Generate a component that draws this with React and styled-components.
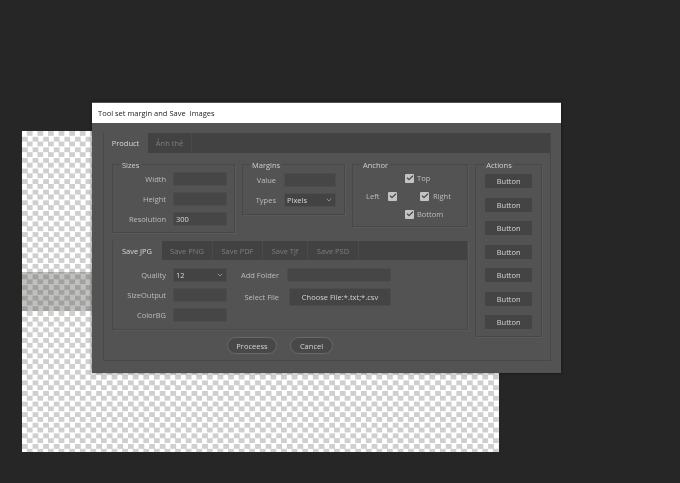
import React from 'react';
import styled, { createGlobalStyle } from 'styled-components';
import { Check, ChevronDown } from 'lucide-react';

const GlobalStyle = createGlobalStyle`
  html, body {
    margin: 0;
    padding: 0;
    background: #262626;
    font-family: "Open Sans", "Liberation Sans", sans-serif;
    font-size: 7.5px;
  }
`;

const Workspace = styled.div`
  position: relative;
  width: 680px;
  height: 483px;
  overflow: hidden;
  background: #262626;
  filter: blur(0.35px);
`;

const Canvas = styled.div`
  position: absolute;
  left: 22px;
  top: 131px;
  width: 477px;
  height: 321px;
  background-color: #fff;
  background-image: repeating-conic-gradient(#cfcfcf 0% 25%, #fff 0% 50%);
  background-size: 10.6px 10.6px;
`;

const Band = styled.div`
  position: absolute;
  left: 0;
  right: 0;
  top: 141px;
  height: 39px;
  background: rgba(85, 85, 78, 0.37);
`;

const Dialog = styled.div`
  position: absolute;
  left: 92px;
  top: 102px;
  width: 469px;
  height: 271px;
  background: #535353;
  box-shadow: 0 0 3px rgba(0, 0, 0, 0.5);
  display: flex;
  flex-direction: column;
`;

const TitleBar = styled.div`
  height: 20px;
  margin-top: 1px;
  padding-left: 6px;
  background: #fff;
  color: #222;
  line-height: 20px;
  white-space: pre;
`;

const DialogBody = styled.div`
  padding: 10px 10px 0 11px;
`;

const OuterFrame = styled.div`
  height: 228px;
  box-sizing: border-box;
  border: 1px solid #484848;
  border-top: none;
`;

const TabBar = styled.div`
  display: flex;
  height: ${p => p.$height}px;
  background: #424242;
`;

const Tab = styled.div`
  width: ${p => p.$width}px;
  display: flex;
  align-items: center;
  justify-content: center;
  box-sizing: border-box;
  background: ${p => (p.$active ? '#535353' : 'transparent')};
  color: ${p => (p.$active ? '#d8d8d8' : '#7e7e7e')};
  border-right: 1px solid ${p => (p.$active ? '#535353' : '#4a4a4a')};
`;

const OuterContent = styled.div`
  display: flex;
  gap: 7px;
  padding: 11px 8px 0 8px;
`;

const MainColumn = styled.div`
  width: 357px;
  display: flex;
  flex-direction: column;
`;

const GroupRow = styled.div`
  display: flex;
  align-items: flex-start;
  gap: 7px;
`;

const Group = styled.div`
  position: relative;
  box-sizing: border-box;
  width: ${p => p.$width}px;
  height: ${p => p.$height}px;
  border: 1px solid #484848;
  box-shadow: 1px 1px 0 #5a5a5a;
`;

const GroupTitle = styled.span`
  position: absolute;
  top: -5px;
  left: ${p => p.$left}px;
  padding: 0 2px;
  background: #535353;
  color: #cfcfcf;
  line-height: 11px;
`;

const Fields = styled.div`
  display: grid;
  grid-template-columns: ${p => p.$labelWidth}px ${p => p.$fieldWidth}px;
  column-gap: ${p => p.$gap || 7}px;
  row-gap: 6px;
  align-items: center;
  align-content: start;
  padding-top: ${p => p.$top || 0}px;
`;

const Label = styled.label`
  color: #bdbdbd;
  text-align: right;
  white-space: nowrap;
`;

const Input = styled.input`
  box-sizing: border-box;
  width: 100%;
  height: 14px;
  padding: 0 2px;
  background: #464646;
  border: 1px solid #4d4d4d;
  outline: none;
  color: #d8d8d8;
  font: 7.5px "Open Sans", "Liberation Sans", sans-serif;
`;

const SelectBox = styled.div`
  box-sizing: border-box;
  height: 14px;
  padding: 0 2px;
  display: flex;
  align-items: center;
  justify-content: space-between;
  background: #434343;
  border: 1px solid #4d4d4d;
  color: #d8d8d8;
  svg {
    color: #b5b5b5;
  }
`;

const AnchorGrid = styled.div`
  display: grid;
  grid-template-columns: 22px 17px 15px 13px auto;
  grid-auto-rows: 18px;
  align-items: center;
  padding: 4px 0 0 13px;
`;

const AnchorText = styled.span`
  grid-column: ${p => p.$col};
  grid-row: ${p => p.$row};
  color: #bdbdbd;
  margin-left: ${p => p.$indent || 0}px;
  white-space: nowrap;
`;

const Box = styled.span`
  grid-column: ${p => p.$col};
  grid-row: ${p => p.$row};
  width: 9px;
  height: 9px;
  display: flex;
  align-items: center;
  justify-content: center;
  background: #c4c4c4;
  border-radius: 1px;
  color: #444;
`;

const SavePanel = styled.div`
  height: 89px;
  margin-top: 8px;
  box-sizing: border-box;
  border: 1px solid #484848;
  border-top: none;
  box-shadow: 1px 1px 0 #5a5a5a;
`;

const SaveContent = styled.div`
  display: flex;
  padding-top: 8px;
`;

const FilePicker = styled.div`
  height: 16px;
  margin-left: 2px;
  display: flex;
  align-items: center;
  justify-content: center;
  background: #444;
  border: 1px solid #4d4d4d;
  color: #d4d4d4;
`;

const Footer = styled.div`
  display: flex;
  gap: 13px;
  margin-top: 7px;
  padding-left: 115px;
`;

const PillButton = styled.div`
  box-sizing: border-box;
  width: ${p => p.$width}px;
  height: 17px;
  display: flex;
  align-items: center;
  justify-content: center;
  background: #484848;
  border: 1px solid #696969;
  border-radius: 9px;
  color: #d4d4d4;
`;

const ActionList = styled.div`
  display: flex;
  flex-direction: column;
  gap: 9.5px;
  padding: 9px 0 0 9px;
`;

const ActionButton = styled.div`
  width: 47px;
  height: 14px;
  display: flex;
  align-items: center;
  justify-content: center;
  background: #444;
  color: #d4d4d4;
`;

const SAVE_TABS = [
  ['Save JPG', 49],
  ['Save PNG', 51],
  ['Save PDF', 50],
  ['Save Tjf', 45],
  ['Save PSD', 51],
];

const CheckBox = ({ col, row }) => (
  <Box $col={col} $row={row}>
    <Check size={8} strokeWidth={3.5} />
  </Box>
);

const App = () => (
  <Workspace>
    <GlobalStyle />
    <Canvas>
      <Band />
    </Canvas>
    <Dialog>
      <TitleBar>Tool set margin and Save  Images</TitleBar>
      <DialogBody>
        <OuterFrame>
          <TabBar $height={20}>
            <Tab $width={44} $active>Product</Tab>
            <Tab $width={44}>Ảnh thẻ</Tab>
          </TabBar>
          <OuterContent>
            <MainColumn>
              <GroupRow>
                <Group $width={123} $height={69}>
                  <GroupTitle $left={7}>Sizes</GroupTitle>
                  <Fields $labelWidth={53} $fieldWidth={54} $top={7}>
                    <Label>Width</Label>
                    <Input />
                    <Label>Height</Label>
                    <Input />
                    <Label>Resolution</Label>
                    <Input defaultValue="300" />
                  </Fields>
                </Group>
                <Group $width={103} $height={51}>
                  <GroupTitle $left={7}>Margins</GroupTitle>
                  <Fields $labelWidth={33} $fieldWidth={52} $gap={8} $top={8}>
                    <Label>Value</Label>
                    <Input />
                    <Label>Types</Label>
                    <SelectBox>
                      Pixels
                      <ChevronDown size={8} />
                    </SelectBox>
                  </Fields>
                </Group>
                <Group $width={116} $height={63}>
                  <GroupTitle $left={8}>Anchor</GroupTitle>
                  <AnchorGrid>
                    <CheckBox col={3} row={1} />
                    <AnchorText $col="3 / 6" $row={1} $indent={12}>Top</AnchorText>
                    <AnchorText $col={1} $row={2}>Left</AnchorText>
                    <CheckBox col={2} row={2} />
                    <CheckBox col={4} row={2} />
                    <AnchorText $col={5} $row={2}>Right</AnchorText>
                    <CheckBox col={3} row={3} />
                    <AnchorText $col="3 / 6" $row={3} $indent={12}>Bottom</AnchorText>
                  </AnchorGrid>
                </Group>
              </GroupRow>
              <SavePanel>
                <TabBar $height={19}>
                  {SAVE_TABS.map(([name, width], i) => (
                    <Tab key={name} $width={width} $active={i === 0}>{name}</Tab>
                  ))}
                </TabBar>
                <SaveContent>
                  <Fields $labelWidth={53} $fieldWidth={54}>
                    <Label>Quality</Label>
                    <SelectBox>
                      12
                      <ChevronDown size={8} />
                    </SelectBox>
                    <Label>SizeOutput</Label>
                    <Input />
                    <Label>ColorBG</Label>
                    <Input />
                  </Fields>
                  <Fields $labelWidth={52} $fieldWidth={104} $gap={8}>
                    <Label>Add Folder</Label>
                    <Input />
                    <Label>Select File</Label>
                    <FilePicker>Choose File:*.txt;*.csv</FilePicker>
                  </Fields>
                </SaveContent>
              </SavePanel>
              <Footer>
                <PillButton $width={50}>Proceess</PillButton>
                <PillButton $width={43}>Cancel</PillButton>
              </Footer>
            </MainColumn>
            <Group $width={67} $height={173}>
              <GroupTitle $left={8}>Actions</GroupTitle>
              <ActionList>
                {[1, 2, 3, 4, 5, 6, 7].map(n => (
                  <ActionButton key={n}>Button</ActionButton>
                ))}
              </ActionList>
            </Group>
          </OuterContent>
        </OuterFrame>
      </DialogBody>
    </Dialog>
  </Workspace>
);

export default App;
